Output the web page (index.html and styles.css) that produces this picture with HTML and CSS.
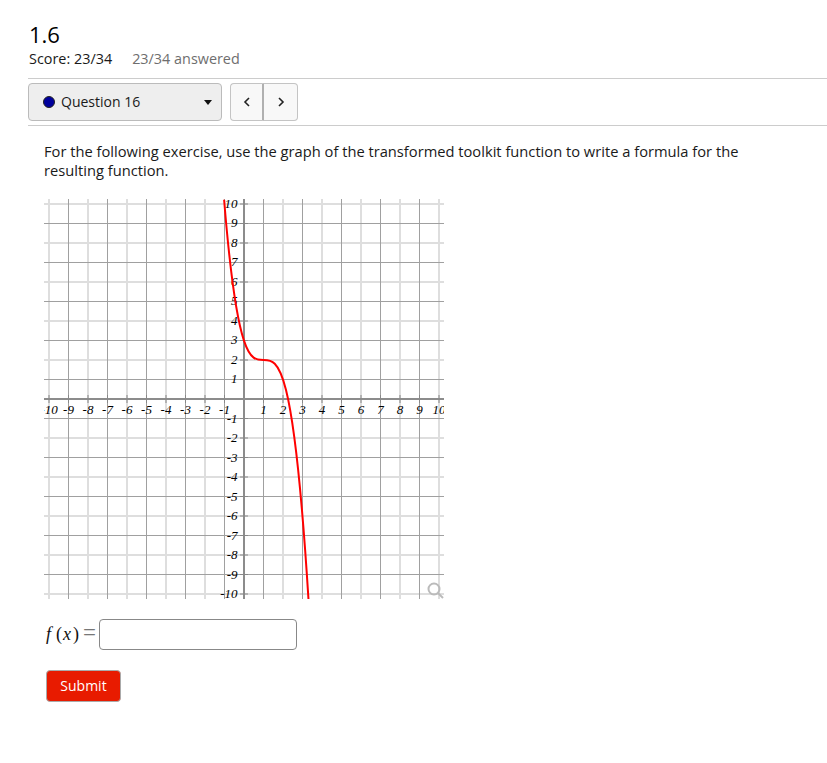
FILE: index.html
```html
<!DOCTYPE html>
<html lang="en">
<head>
<meta charset="utf-8">
<title>1.6</title>
<link rel="stylesheet" href="styles.css">
</head>
<body>
<main class="page">
  <h1 class="title">1.6</h1>
  <div class="score"><span>Score: 23/34</span><span class="answered">23/34 answered</span></div>
  <nav class="qbar">
    <div class="qselect">
      <span class="dot"></span>
      <span class="qname">Question 16</span>
      <span class="caret"></span>
    </div>
    <div class="qnav">
      <button class="navbtn" type="button"><svg width="8" height="10" viewBox="0 0 8 10"><path d="M6 1 2 5l4 4" fill="none" stroke="#222" stroke-width="1.6"/></svg></button>
      <button class="navbtn" type="button"><svg width="8" height="10" viewBox="0 0 8 10"><path d="M2 1l4 4-4 4" fill="none" stroke="#222" stroke-width="1.6"/></svg></button>
    </div>
  </nav>
  <section class="question">
    <p class="prompt">For the following exercise, use the graph of the transformed toolkit function to write a formula for the resulting function.</p>
    <svg class="graph" width="400" height="400" viewBox="0 0 400 400" role="img" aria-label="Graph of a transformed cubic function">
      <path class="minor" d="M5 0V400M44 0V400M83 0V400M122 0V400M161 0V400M239 0V400M278 0V400M317 0V400M356 0V400M395 0V400M0 5H400M0 44H400M0 83H400M0 122H400M0 161H400M0 239H400M0 278H400M0 317H400M0 356H400M0 395H400"/>
      <path class="major" d="M24.500 0V400M63.500 0V400M102.500 0V400M141.500 0V400M180.500 0V400M219.500 0V400M258.500 0V400M297.500 0V400M336.500 0V400M375.500 0V400M0 24.500H400M0 63.500H400M0 102.500H400M0 141.500H400M0 180.500H400M0 219.500H400M0 258.500H400M0 297.500H400M0 336.500H400M0 375.500H400"/>
      <path class="axis" d="M200 0V400M0 200H400"/>
      <path class="tick" d="M5 196V204M24.500 196V204M44 196V204M63.500 196V204M83 196V204M102.500 196V204M122 196V204M141.500 196V204M161 196V204M180.500 196V204M219.500 196V204M239 196V204M258.500 196V204M278 196V204M297.500 196V204M317 196V204M336.500 196V204M356 196V204M375.500 196V204M395 196V204M196 5H204M196 24.500H204M196 44H204M196 63.500H204M196 83H204M196 102.500H204M196 122H204M196 141.500H204M196 161H204M196 180.500H204M196 219.500H204M196 239H204M196 258.500H204M196 278H204M196 297.500H204M196 317H204M196 336.500H204M196 356H204M196 375.500H204M196 395H204"/>
      <g class="xlabels">
        <text x="5" y="215">-10</text><text x="24.500" y="215">-9</text><text x="44" y="215">-8</text><text x="63.500" y="215">-7</text><text x="83" y="215">-6</text><text x="102.500" y="215">-5</text><text x="122" y="215">-4</text><text x="141.500" y="215">-3</text><text x="161" y="215">-2</text><text x="180.500" y="215">-1</text>
        <text x="219.500" y="215">1</text><text x="239" y="215">2</text><text x="258.500" y="215">3</text><text x="278" y="215">4</text><text x="297.500" y="215">5</text><text x="317" y="215">6</text><text x="336.500" y="215">7</text><text x="356" y="215">8</text><text x="375.500" y="215">9</text><text x="395" y="215">10</text>
      </g>
      <g class="ylabels">
        <text x="193.500" y="9">10</text><text x="193.500" y="28">9</text><text x="193.500" y="48">8</text><text x="193.500" y="67">7</text><text x="193.500" y="87">6</text><text x="193.500" y="106">5</text><text x="193.500" y="126">4</text><text x="193.500" y="145">3</text><text x="193.500" y="165">2</text><text x="193.500" y="184">1</text>
        <text x="193.500" y="224">-1</text><text x="193.500" y="243">-2</text><text x="193.500" y="263">-3</text><text x="193.500" y="282">-4</text><text x="193.500" y="302">-5</text><text x="193.500" y="321">-6</text><text x="193.500" y="341">-7</text><text x="193.500" y="360">-8</text><text x="193.500" y="380">-9</text><text x="193.500" y="399">-10</text>
      </g>
      <path class="curve" d="M180.11 .77C208.25 344.8 236.4 -49.19 264.55 401.36"/>
      <g class="zoomicon"><circle cx="390" cy="390" r="5.500"/><path d="M394 394l5 5"/></g>
    </svg>
    <div class="answer">
      <span class="formula"><i class="mi">f</i><span class="paren">(</span><i class="mi">x</i><span class="paren">)</span><span class="eq">=</span></span>
      <input class="field" type="text" aria-label="f(x)">
    </div>
    <button class="submit" type="button">Submit</button>
  </section>
</main>
</body>
</html>
```
FILE: styles.css
```css
* { box-sizing: border-box; }
html, body { margin: 0; padding: 0; background: #fff; }
body { font-family: "Open Sans", sans-serif; font-size: 14px; color: #1a1a1a; height: 763px; overflow: hidden; }
.page { padding: 21px 0 0 28px; }
.title { margin: 0; font-size: 22px; font-weight: 400; line-height: 26px; color: #000; padding-left: 1px; }
.score { display: flex; gap: 20px; margin-top: 2px; line-height: 20px; padding-left: 1px; font-size: 14.4px; }
.answered { color: #6e6e6e; }
.qbar { display: flex; gap: 8px; margin-top: 9px; padding: 4px 0; border-top: 1px solid #ccc; border-bottom: 1px solid #ccc; }
.qselect { width: 194px; height: 38px; display: flex; align-items: center; padding: 0 9px 0 14px; background: #eee; border: 1px solid #bbb; border-radius: 4px; }
.dot { width: 12px; height: 12px; border-radius: 50%; background: #00009c; border: 1px solid #222; }
.qname { margin-left: 6px; flex: 1; padding-bottom: 2px; }
.caret { width: 0; height: 0; border-left: 4px solid transparent; border-right: 4px solid transparent; border-top: 5px solid #111; }
.qnav { display: flex; }
.navbtn { width: 34px; height: 38px; padding: 0; display: flex; align-items: center; justify-content: center; background: #f8f8f8; border: 1px solid #c4c4c4; border-radius: 4px 0 0 4px; border-right: 2px solid #b0b0b0; }
.navbtn + .navbtn { border-left: 0; border-right: 1px solid #c4c4c4; border-radius: 0 4px 4px 0; }
.question { padding: 16px 0 0 16px; }
.prompt { margin: 0; width: 720px; line-height: 19px; font-size: 14.7px; color: #1a1a1a; }
.graph { display: block; margin-top: 19px; font-family: "Liberation Serif", serif; font-style: italic; font-size: 13px; overflow: hidden; }
.graph path, .graph circle { fill: none; }
.minor { stroke: #dedede; stroke-width: 2; }
.major { stroke: #a0a0a0; stroke-width: 1; }
.axis { stroke: #8c8c8c; stroke-width: 2; }
.tick { stroke: #888; stroke-width: 1; }
.xlabels text { text-anchor: middle; fill: #000; }
.ylabels text { text-anchor: end; fill: #000; }
.graph .curve { stroke: #f00; stroke-width: 2; }
.zoomicon circle, .zoomicon path { stroke: #bbb; stroke-width: 2; }
.answer { display: flex; align-items: center; margin-top: 20px; }
.formula { display: flex; align-items: baseline; width: 55px; padding-left: 2px; font-family: "Liberation Serif", serif; font-size: 18px; color: #111; white-space: nowrap; }
.mi { font-style: italic; }
.paren { margin-left: 5px; font-weight: 400; }
.paren + .mi { margin-left: 1px; }
.mi + .paren + .mi + .paren { margin-left: 2px; }
.eq { margin-left: 4px; font-size: 23px; line-height: 18px; color: #777; }
.field { width: 198px; height: 31px; border: 1px solid #888; border-radius: 4px; background: #fff; }
.submit { display: block; margin: 20px 0 0 2px; padding: 0 0 2px; width: 75px; height: 32px; font: 14px "Open Sans", sans-serif; color: #fff; background: #e81b00; border: 1px solid #aaa; border-radius: 4px; }
```
